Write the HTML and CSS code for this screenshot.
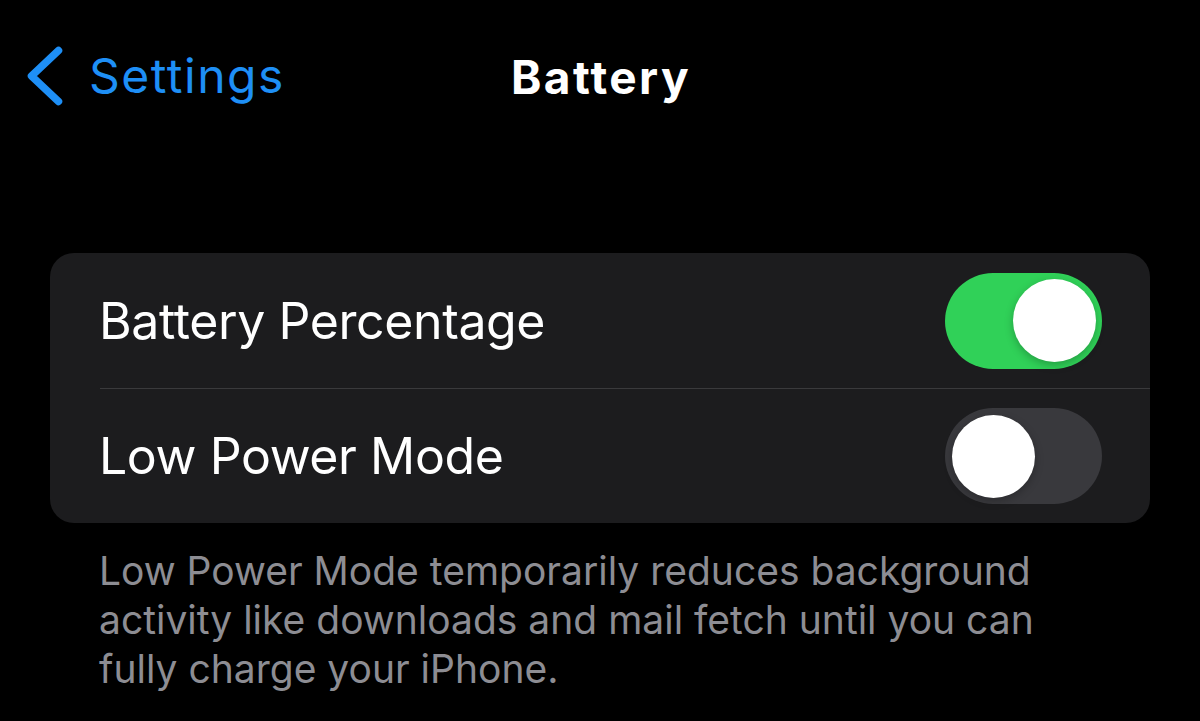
FILE: index.html
```html
<!DOCTYPE html>
<html lang="en">
<head>
<meta charset="utf-8">
<title>Battery</title>
<link rel="stylesheet" href="styles.css">
</head>
<body>
<div class="screen">
  <header class="nav">
    <div class="nav-left">
      <a class="back" href="#">
        <svg class="chevron" width="42" height="66" viewBox="0 0 42 66" aria-hidden="true">
          <polyline points="34.5,7.5 7.5,33 34.5,58.5" fill="none" stroke="#1e8ff6" stroke-width="7.5" stroke-linecap="round" stroke-linejoin="round"/>
        </svg>
        <span class="back-label">Settings</span>
      </a>
    </div>
    <h1 class="title">Battery</h1>
    <div class="nav-right"></div>
  </header>

  <section class="group">
    <div class="row">
      <span class="row-label">Battery Percentage</span>
      <span class="switch on"><span class="knob"></span></span>
    </div>
    <div class="row">
      <span class="row-label">Low Power Mode</span>
      <span class="switch off"><span class="knob"></span></span>
    </div>
  </section>

  <p class="footer">Low Power Mode temporarily reduces background<br>activity like downloads and mail fetch until you can<br>fully charge your iPhone.</p>
</div>
</body>
</html>
```
FILE: styles.css
```css
html, body {
  margin: 0;
  padding: 0;
  background: #000;
}

body {
  width: 1200px;
  height: 721px;
  overflow: hidden;
  font-family: "Inter", "Liberation Sans", sans-serif;
  color: #fff;
  -webkit-font-smoothing: antialiased;
}

.screen {
  display: flex;
  flex-direction: column;
}

.nav {
  height: 154px;
  display: grid;
  grid-template-columns: 1fr auto 1fr;
  align-items: center;
}

.nav-left {
  display: flex;
  align-items: center;
}

.back {
  display: flex;
  align-items: center;
  text-decoration: none;
  color: #1e8ff6;
  margin-left: 24px;
}

.chevron {
  display: block;
  margin-top: -2px;
}

.back-label {
  font-size: 48px;
  font-weight: 400;
  letter-spacing: 1.5px;
  margin-left: 23px;
  margin-top: -4px;
}

.title {
  margin: 0;
  font-size: 46px;
  font-weight: 700;
  letter-spacing: 2.4px;
  color: #fff;
  margin-left: 2px;
}

.group {
  margin: 99px 50px 0 50px;
  background: #1c1c1e;
  border-radius: 24px;
  overflow: hidden;
}

.row {
  height: 135px;
  display: flex;
  align-items: center;
  justify-content: space-between;
  margin-left: 50px;
  padding-right: 48px;
}

.row + .row {
  border-top: 1px solid #3a3a3c;
  height: 134px;
}

.row-label {
  font-size: 50px;
  font-weight: 400;
  letter-spacing: -0.4px;
  color: #fff;
  margin-left: -1px;
}

.switch {
  width: 157px;
  height: 96px;
  border-radius: 48px;
  box-sizing: border-box;
  padding: 6.5px;
  display: flex;
  align-items: center;
}

.switch.on {
  background: #30d158;
  justify-content: flex-end;
}

.switch.off {
  background: #39393d;
  justify-content: flex-start;
}

.knob {
  width: 83px;
  height: 83px;
  border-radius: 50%;
  background: #fff;
  box-shadow: 0 3px 8px rgba(0, 0, 0, 0.25);
}

.footer {
  margin: 23px 0 0 99px;
  font-size: 39px;
  line-height: 49px;
  letter-spacing: 0;
  color: #8d8d93;
}
```
